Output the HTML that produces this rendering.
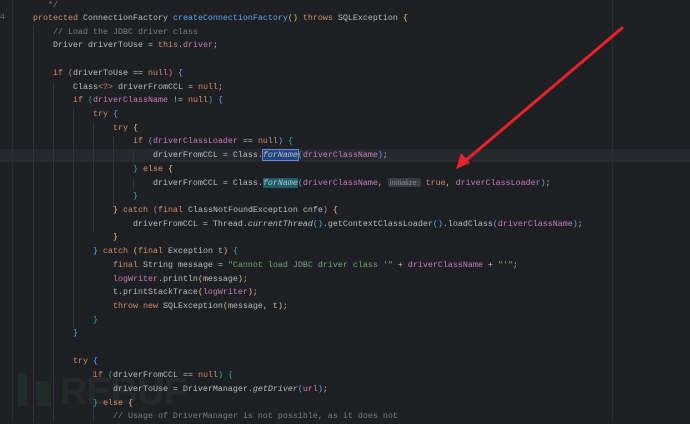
<!DOCTYPE html>
<html><head><meta charset="utf-8"><style>
body{margin:0;width:690px;height:422px;overflow:hidden;background:#1e1f22;position:relative;font-family:"Liberation Mono",monospace;}
.gut{position:absolute;left:12px;top:0;width:1px;height:422px;background:#2b2d30}
.rm{position:absolute;left:612px;top:0;width:1px;height:422px;background:#2b2d30}
.hl{position:absolute;left:0;top:149px;width:690px;height:13px;background:#26282e}
.g{position:absolute;width:1px;background:#33353a}
.l{position:absolute;left:33px;white-space:pre;font-size:8.33px;line-height:13.8px;color:#bcbec4}
.k{color:#cf8e6d}.m{color:#56a8f5}.f{color:#c77dbb}.c{color:#7a7e85}.s{color:#6aab73}.i{font-style:italic}
.b1{color:#e6c07b}.b2{color:#c77dbb}.b3{color:#56a8f5}.b4{color:#2aaca0}
.sel{background:#214283;outline:1px solid #6a8bd1}.tl{background:#1b5d6a}
.hint{background:#393b40;color:#868a91;font-family:"Liberation Sans",sans-serif;font-size:7.5px;border-radius:2px;padding:0 2px}
.wm{position:absolute;left:36px;top:373px;font-family:"Liberation Sans",sans-serif;font-weight:bold;font-size:38px;line-height:38px;color:#26282c;letter-spacing:-1px}
.wb{position:absolute;background:#1f2c28}
</style></head><body>
<div class="hl"></div><div class="gut"></div><div class="rm"></div>
<div class="wb" style="left:18px;top:373px;width:9px;height:33px"></div>
<div class="wb" style="left:36px;top:381px;width:15px;height:25px"></div>
<div style="position:absolute;left:0;top:13px;font-family:'Liberation Mono',monospace;font-size:8px;color:#6f737a">4</div>
<div class="g" style="left:33px;top:26px;height:396px"></div>
<div class="g" style="left:53px;top:82px;height:340px"></div>
<div class="g" style="left:73px;top:108px;height:220px"></div>
<div class="g" style="left:93px;top:122px;height:110px"></div>
<div class="g" style="left:113px;top:136px;height:70px"></div>
<div class="g" style="left:133px;top:150px;height:12px"></div>
<div class="g" style="left:133px;top:178px;height:12px"></div>
<div class="g" style="left:93px;top:370px;height:52px"></div>
<div class="wm" style="left:60px">REBUF</div>
<div class="l" style="top:-1px"><span class="c">   */</span></div>
<div class="l" style="top:12px"><span class="k">protected</span> ConnectionFactory <span class="m">createConnectionFactory</span><span class="b1">()</span> <span class="k">throws</span> SQLException <span class="b1">{</span></div>
<div class="l" style="top:26px"><span class="c">    // Load the JDBC driver class</span></div>
<div class="l" style="top:39px">    Driver driverToUse = <span class="k">this</span>.<span class="f">driver</span>;</div>
<div class="l" style="top:67px">    <span class="k">if</span> <span class="b2">(</span>driverToUse == <span class="k">null</span><span class="b2">)</span> <span class="b3">{</span></div>
<div class="l" style="top:81px">        Class<span class="k">&lt;?&gt;</span> driverFromCCL = <span class="k">null</span>;</div>
<div class="l" style="top:94px">        <span class="k">if</span> <span class="b4">(</span><span class="f">driverClassName</span> != <span class="k">null</span><span class="b4">)</span> <span class="b3">{</span></div>
<div class="l" style="top:108px">            <span class="k">try</span> <span class="b3">{</span></div>
<div class="l" style="top:122px">                <span class="k">try</span> <span class="b1">{</span></div>
<div class="l" style="top:135px">                    <span class="k">if</span> <span class="b3">(</span><span class="f">driverClassLoader</span> == <span class="k">null</span><span class="b3">)</span> <span class="b4">{</span></div>
<div class="l" style="top:149px">                        driverFromCCL = Class.<span class="i sel">forName</span><span class="b3">(</span><span class="f">driverClassName</span><span class="b3">)</span>;</div>
<div class="l" style="top:163px">                    <span class="b4">}</span> <span class="k">else</span> <span class="b1">{</span></div>
<div class="l" style="top:176px">                        driverFromCCL = Class.<span class="i tl">forName</span><span class="b3">(</span><span class="f">driverClassName</span>, <span class="hint">initialize:</span> <span class="k">true</span>, <span class="f">driverClassLoader</span><span class="b3">)</span>;</div>
<div class="l" style="top:190px">                    <span class="b4">}</span></div>
<div class="l" style="top:204px">                <span class="b1">}</span> <span class="k">catch</span> <span class="b2">(</span><span class="k">final</span> ClassNotFoundException cnfe<span class="b2">)</span> <span class="b1">{</span></div>
<div class="l" style="top:218px">                    driverFromCCL = Thread.<span class="i">currentThread</span><span class="b3">()</span>.getContextClassLoader<span class="b3">()</span>.loadClass<span class="b3">(</span><span class="f">driverClassName</span><span class="b3">)</span>;</div>
<div class="l" style="top:231px">                <span class="b1">}</span></div>
<div class="l" style="top:245px">            <span class="b3">}</span> <span class="k">catch</span> <span class="b1">(</span><span class="k">final</span> Exception t<span class="b1">)</span> <span class="b4">{</span></div>
<div class="l" style="top:259px">                <span class="k">final</span> String message = <span class="s">"Cannot load JDBC driver class '"</span> + <span class="f">driverClassName</span> + <span class="s">"'"</span>;</div>
<div class="l" style="top:273px">                <span class="f">logWriter</span>.println<span class="b1">(</span>message<span class="b1">)</span>;</div>
<div class="l" style="top:286px">                t.printStackTrace<span class="b1">(</span><span class="f">logWriter</span><span class="b1">)</span>;</div>
<div class="l" style="top:300px">                <span class="k">throw new</span> SQLException<span class="b1">(</span>message, t<span class="b1">)</span>;</div>
<div class="l" style="top:314px">            <span class="b4">}</span></div>
<div class="l" style="top:327px">        <span class="b3">}</span></div>
<div class="l" style="top:355px">        <span class="k">try</span> <span class="b3">{</span></div>
<div class="l" style="top:369px">            <span class="k">if</span> <span class="b4">(</span>driverFromCCL == <span class="k">null</span><span class="b4">)</span> <span class="b4">{</span></div>
<div class="l" style="top:383px">                driverToUse = DriverManager.<span class="i">getDriver</span><span class="b3">(</span><span class="f">url</span><span class="b3">)</span>;</div>
<div class="l" style="top:397px">            <span class="b4">}</span> <span class="k">else</span> <span class="b1">{</span></div>
<div class="l" style="top:410px"><span class="c">                // Usage of DriverManager is not possible, as it does not</span></div>
<svg style="position:absolute;left:0;top:0" width="690" height="422">
<line x1="622" y1="28" x2="464" y2="162" stroke="#e8222a" stroke-width="3" stroke-linecap="round"/>
<polygon points="456,169 461,153 470,163" fill="#e8222a"/>
</svg>
</body></html>
